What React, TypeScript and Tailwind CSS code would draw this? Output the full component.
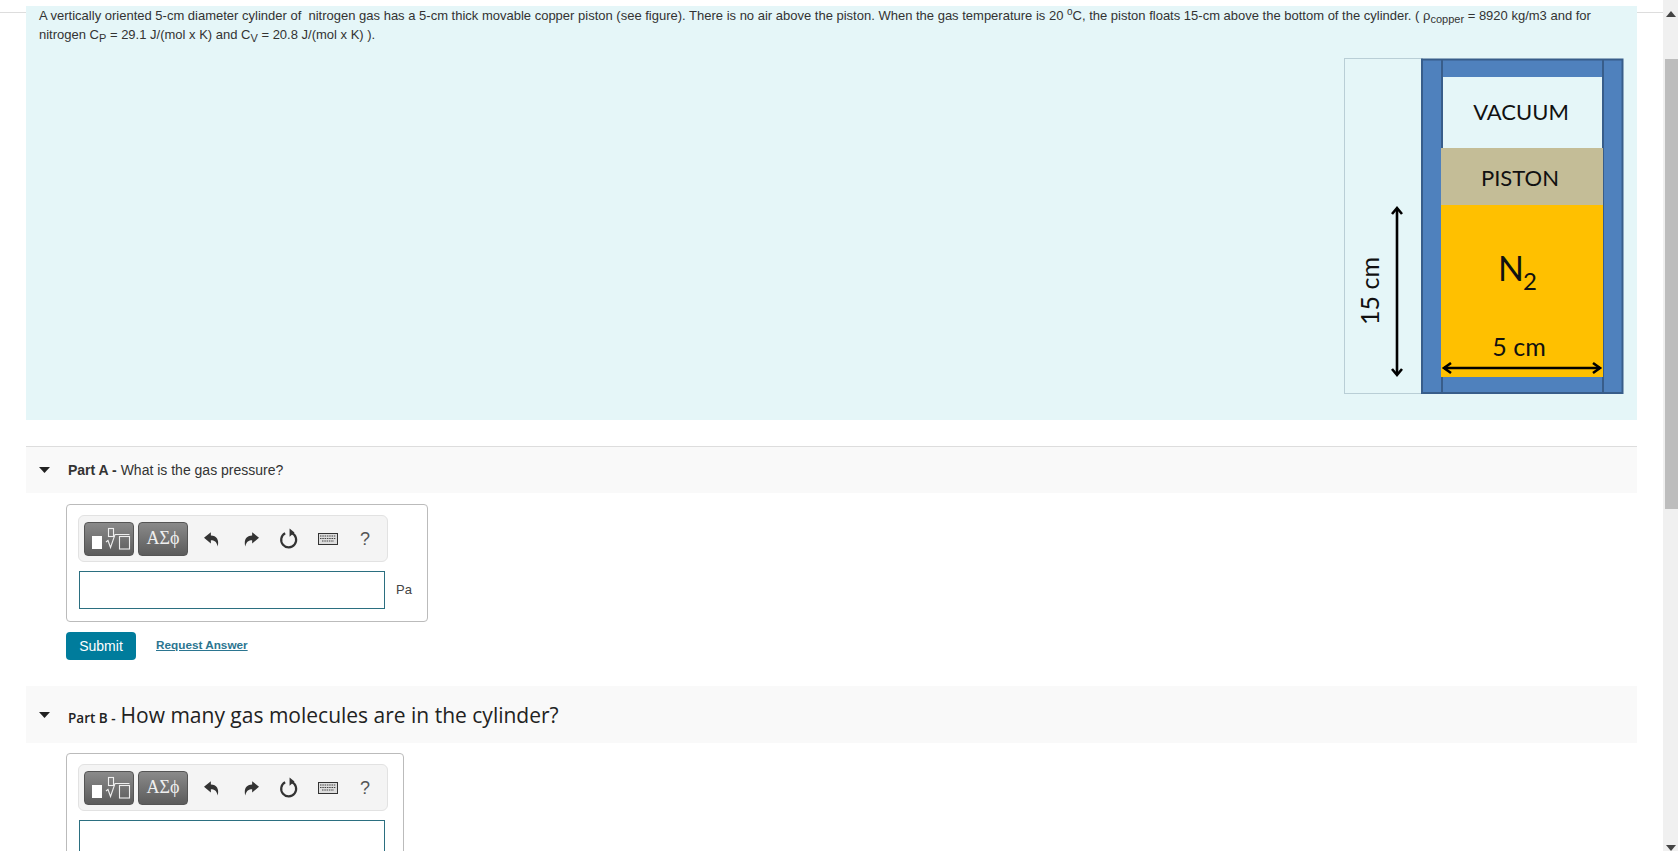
import React from 'react';

const Arrow = ({ flip }: { flip?: boolean }) => (
  <svg width="16" height="16" viewBox="0 0 14 14" className={flip ? '-scale-x-100' : ''}>
    <path d="M6 1 L0 6 L6 11 V8 C9 8 11 9 12 13.5 C13.5 8 11 4 6 4 Z" fill="#333" />
  </svg>
);

const Toolbar = () => (
  <div className="flex h-[47px] w-[310px] items-center rounded-md border border-[#e2e2e2] bg-[#f4f4f4] pl-[5px]">
    <div className="relative h-[34px] w-[50px] rounded border border-[#555] bg-gradient-to-b from-[#8a8a8a] to-[#5c5c5c]">
      <div className="absolute left-[7px] top-[13px] h-[13px] w-[10px] bg-white" />
      <svg width="30" height="28" viewBox="0 0 30 28" className="absolute left-[17px] top-[2px]">
        <rect x="6.5" y="3.5" width="5" height="8" fill="none" stroke="#eee" strokeWidth="1.1" />
        <path d="M4 17 L6 15.5 L8.5 22.5 L13 9.5 H27.5" fill="none" stroke="#eee" strokeWidth="1.1" />
        <rect x="17.5" y="11.5" width="10" height="12.5" fill="none" stroke="#eee" strokeWidth="1.1" />
      </svg>
    </div>
    <div className="ml-[4px] flex h-[34px] w-[50px] items-center justify-center rounded border border-[#555] bg-gradient-to-b from-[#8a8a8a] to-[#5c5c5c] font-['Liberation_Serif',serif] text-[18px] text-[#eee]">
      ΑΣϕ
    </div>
    <div className="ml-[16px] flex w-[16px] justify-center">
      <Arrow />
    </div>
    <div className="ml-[23px] flex w-[16px] justify-center">
      <Arrow flip />
    </div>
    <svg width="20" height="22" viewBox="0 0 18 20" className="ml-[20px]">
      <path d="M11.5 4.6 A6.8 6.8 0 1 1 5.5 4.8" fill="none" stroke="#333" strokeWidth="2" />
      <path d="M9.5 0.5 L9.5 8 L14 4.2 Z" fill="#333" />
    </svg>
    <svg width="20" height="12" viewBox="0 0 20 12" className="ml-[19px]">
      <rect x="0.5" y="0.5" width="19" height="11" fill="#ddd" stroke="#333" />
      <path d="M2 3 H18 M2 5.5 H18 M4 8 H16" stroke="#444" strokeWidth="1.2" strokeDasharray="1.5 0.8" />
    </svg>
    <span className="ml-[22px] text-[18px] leading-none text-[#555]">?</span>
  </div>
);

const PartHeader = ({ children, className }: { children: React.ReactNode; className: string }) => (
  <div className={`flex items-center bg-[#f9f9f9] ${className}`}>
    <svg width="11" height="6" viewBox="0 0 11 6" className="ml-[13px] mr-[18px] shrink-0">
      <path d="M0 0 H11 L5.5 6 Z" fill="#222" />
    </svg>
    {children}
  </div>
);

const Figure = () => (
  <svg width="280" height="337" viewBox="1344 58 280 337" className="block">
    <rect x="1344.5" y="58.5" width="78" height="335" fill="none" stroke="#b9ced6" />
    <rect x="1422" y="59.5" width="200.5" height="333.5" fill="#4f81bd" stroke="#385d8a" strokeWidth="2" />
    <path d="M1442 60 V392 M1603 60 V392" stroke="#385d8a" strokeWidth="2" />
    <rect x="1443" y="77" width="159" height="72" fill="#e5f6f8" />
    <rect x="1441" y="148" width="162" height="58" fill="#c4bd97" />
    <rect x="1441" y="205" width="162" height="172" fill="#ffc000" />
    <g fontFamily="Lato, sans-serif" fill="#111" textAnchor="middle">
      <text x="1521" y="120" fontSize="22">VACUUM</text>
      <text x="1520" y="186" fontSize="22">PISTON</text>
      <text x="1511" y="281" fontSize="34">N</text>
      <text x="1530" y="290" fontSize="24">2</text>
      <text x="1519" y="356" fontSize="25">5 cm</text>
      <text x="0" y="0" fontSize="25" transform="translate(1379 291) rotate(-90)">15 cm</text>
    </g>
    <g fill="none" stroke="#000" strokeWidth="2.6">
      <path d="M1397 209 V374" />
      <path d="M1392 214 L1397 208 L1402 214 M1392 369 L1397 375 L1402 369" />
      <path d="M1444 368 H1600" />
      <path d="M1451 363 L1444 368 L1451 373 M1593 363 L1600 368 L1593 373" />
    </g>
  </svg>
);

export default function App() {
  return (
    <div className="relative flex h-[851px] w-[1678px] overflow-hidden bg-white font-['Liberation_Sans',Arial,sans-serif] text-[#333]">
      <div className="absolute left-0 top-[12px] h-px w-[1664px] bg-[#ddd]" />
      <main className="relative flex-1 pl-[26px] pr-[26px] pt-[6px]">
        <section className="bg-[#e5f6f8] pb-[25px]">
          <p className="pl-[13px] pr-[40px] text-[13px] leading-[19px]">
            A vertically oriented 5-cm diameter cylinder of&nbsp; nitrogen gas has a 5-cm thick movable copper piston (see figure). There is no air above the piston. When the gas temperature is 20 <sup className="text-[10px]">o</sup>C, the piston floats 15-cm above the bottom of the cylinder. ( ρ<sub className="text-[11px]">copper</sub> = 8920 kg/m3 and for nitrogen C<sub className="text-[11px]">P</sub> = 29.1 J/(mol x K) and C<sub className="text-[11px]">V</sub> = 20.8 J/(mol x K) ).
          </p>
          <div className="mt-[14px] flex justify-end pr-[13px]">
            <Figure />
          </div>
        </section>

        <PartHeader className="mt-[26px] h-[47px] border-t border-[#ddd]">
          <span className="text-[14px]">
            <b>Part A -</b> What is the gas pressure?
          </span>
        </PartHeader>
        <div className="ml-[40px] mt-[11px] h-[118px] w-[362px] rounded border border-[#bbb] pl-[11px] pt-[10px]">
          <Toolbar />
          <div className="ml-px mt-[9px] flex items-center">
            <div className="h-[38px] w-[306px] border border-[#2b6f80]" />
            <span className="ml-[11px] text-[13px] text-[#444]">Pa</span>
          </div>
        </div>
        <div className="ml-[40px] mt-[10px] flex items-center">
          <button className="h-[28px] w-[70px] rounded-sm bg-[#007c9c] text-[14px] text-white">Submit</button>
          <a className="ml-[20px] -mt-[2px] text-[11.75px] font-bold text-[#2b7590] underline">Request Answer</a>
        </div>

        <PartHeader className="mt-[26px] h-[57px]">
          <span className="mt-[2px] flex items-baseline font-['Open_Sans',sans-serif] text-[#222]">
            <span className="mr-[5px] text-[13.5px] font-semibold">Part B -</span>
            <span className="text-[21px]">How many gas molecules are in the cylinder?</span>
          </span>
        </PartHeader>
        <div className="ml-[40px] mt-[10px] h-[140px] w-[338px] rounded border border-[#bbb] pl-[11px] pt-[10px]">
          <Toolbar />
          <div className="ml-px mt-[9px] h-[38px] w-[306px] border border-[#2b6f80]" />
        </div>
      </main>

      <aside className="relative flex w-[15px] shrink-0 flex-col items-center bg-[#f0f0f0]">
        <svg width="10" height="6" viewBox="0 0 10 6" className="mt-[11px]">
          <path d="M0 6 L5 0 L10 6 Z" fill="#444" />
        </svg>
        <div className="ml-[2px] mt-[42px] h-[450px] w-[13px] self-start bg-[#bdbdbd]" />
        <svg width="10" height="6" viewBox="0 0 10 6" className="mt-auto">
          <path d="M0 0 L5 6 L10 0 Z" fill="#444" />
        </svg>
      </aside>
    </div>
  );
}
